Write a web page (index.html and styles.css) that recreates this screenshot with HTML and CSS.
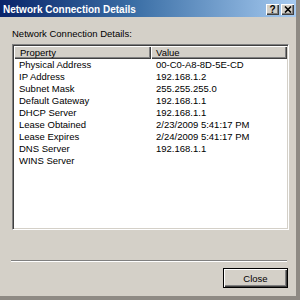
FILE: index.html
```html
<!DOCTYPE html>
<html lang="en">
<head>
    <meta charset="UTF-8">
    <title>Network Connection Details</title>
    <link rel="stylesheet" href="styles.css">
</head>
<body>
    <div class="window">
        <div class="titlebar">
            <span class="title">Network Connection Details</span>
            <div class="caption-buttons">
                <span class="cap-btn help">?</span>
                <span class="cap-btn close">
                    <svg width="8" height="7" viewBox="0 0 8 7">
                        <path d="M1 0.5 L7 6.5 M7 0.5 L1 6.5" stroke="#000" stroke-width="1.6" fill="none"/>
                    </svg>
                </span>
            </div>
        </div>
        <div class="client">
            <div class="label">Network Connection Details:</div>
            <div class="listbox">
                <div class="list-header">
                    <div class="col-head prop">Property</div>
                    <div class="col-head value">Value</div>
                </div>
                <div class="list-row"><span class="prop">Physical Address</span><span class="value">00-C0-A8-8D-5E-CD</span></div>
                <div class="list-row"><span class="prop">IP Address</span><span class="value">192.168.1.2</span></div>
                <div class="list-row"><span class="prop">Subnet Mask</span><span class="value">255.255.255.0</span></div>
                <div class="list-row"><span class="prop">Default Gateway</span><span class="value">192.168.1.1</span></div>
                <div class="list-row"><span class="prop">DHCP Server</span><span class="value">192.168.1.1</span></div>
                <div class="list-row"><span class="prop">Lease Obtained</span><span class="value">2/23/2009 5:41:17 PM</span></div>
                <div class="list-row"><span class="prop">Lease Expires</span><span class="value">2/24/2009 5:41:17 PM</span></div>
                <div class="list-row"><span class="prop">DNS Server</span><span class="value">192.168.1.1</span></div>
                <div class="list-row"><span class="prop">WINS Server</span><span class="value"></span></div>
            </div>
            <div class="separator"></div>
            <div class="footer">
                <button class="btn">Close</button>
            </div>
        </div>
    </div>
</body>
</html>
```

FILE: styles.css
```css
body {
    margin: 0;
    padding: 0;
    background-color: #d4d0c8;
    font-family: "Liberation Sans", Arial, sans-serif;
    font-size: 9.5px;
    color: #000;
}
.window {
    width: 300px;
    height: 300px;
    box-sizing: border-box;
    background-color: #d4d0c8;
    border-right: 4px solid #8e8a84;
    border-bottom: 4px solid #8e8a84;
    display: flex;
    flex-direction: column;
}
.titlebar {
    height: 17px;
    display: flex;
    align-items: center;
    justify-content: space-between;
    padding-left: 3px;
    padding-right: 2px;
    background: linear-gradient(to right, #0a246a, #3a6ea5 45%, #a6caf0);
}
.title {
    color: #fff;
    font-weight: bold;
    font-size: 10px;
    padding-top: 1px;
}
.caption-buttons {
    display: flex;
    gap: 2px;
    padding-top: 2px;
}
.cap-btn {
    width: 13px;
    height: 11px;
    box-sizing: border-box;
    background-color: #d4d0c8;
    box-shadow: inset 1px 1px #fff, inset -1px -1px #404040, inset -2px -2px #808080;
    display: flex;
    align-items: center;
    justify-content: center;
    font-weight: bold;
    font-size: 10px;
    line-height: 11px;
}
.client {
    flex: 1;
    padding: 11px 7px 0 12px;
    display: flex;
    flex-direction: column;
}
.label {
    line-height: 12px;
    margin-bottom: 4px;
}
.listbox {
    height: 186px;
    box-sizing: border-box;
    background-color: #fff;
    border-top: 1px solid #808080;
    border-left: 1px solid #808080;
    border-right: 1px solid #fff;
    border-bottom: 1px solid #fff;
    box-shadow: inset 1px 1px #404040, inset -1px -1px #d4d0c8;
    padding: 1px;
}
.list-header {
    display: flex;
    height: 13px;
}
.col-head {
    background-color: #d4d0c8;
    box-shadow: inset 1px 1px #fff, inset -1px -1px #404040, inset -2px -2px #808080;
    line-height: 13px;
}
.col-head.prop {
    width: 137px;
    padding-left: 6px;
    box-sizing: border-box;
}
.col-head.value {
    flex: 1;
    padding-left: 5px;
}
.list-row {
    display: flex;
    height: 12px;
    line-height: 12px;
}
.list-row .prop {
    width: 137px;
    padding-left: 5px;
    box-sizing: border-box;
}
.list-row .value {
    padding-left: 5px;
}
.separator {
    margin-top: 30px;
    margin-left: -1px;
    margin-right: 2px;
    border-top: 1px solid #808080;
    border-bottom: 1px solid #fff;
}
.footer {
    display: flex;
    justify-content: flex-end;
    padding-top: 6px;
    padding-right: 1px;
}
.btn {
    width: 65px;
    height: 20px;
    background-color: #d4d0c8;
    border: 1px solid #000;
    box-shadow: inset 1px 1px #fff, inset -1px -1px #404040, inset -2px -2px #808080;
    font-family: "Liberation Sans", Arial, sans-serif;
    font-size: 9.5px;
    color: #000;
    padding: 0;
}
```
